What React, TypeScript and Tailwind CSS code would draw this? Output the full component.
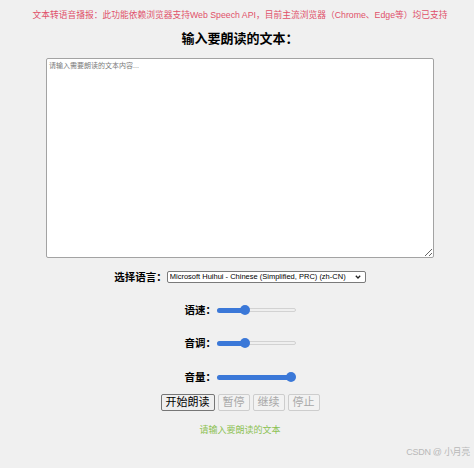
import React from "react";

const FONT = { fontFamily: '"Liberation Sans", "Noto Sans CJK SC", sans-serif' } as const;

function Slider({ label, pct }: { label: string; pct: number }) {
  return (
    <div className="flex items-center h-[12px]">
      <span className="text-[10.5px] leading-[12px] font-bold text-black w-[32px]">{label}</span>
      <div className="relative w-[79px] h-[12px] flex items-center">
        <div className="w-full h-[4px] rounded-full bg-[#efefef] border border-[#d2d2d2]" />
        <div
          className="absolute left-0 top-[3.5px] h-[5px] rounded-full bg-[#3b78d8]"
          style={{ width: `${5 + pct * 69}px` }}
        />
        <div
          className="absolute top-[1px] w-[10px] h-[10px] rounded-full bg-[#3b78d8]"
          style={{ left: `${pct * 69}px` }}
        />
      </div>
    </div>
  );
}

export default function App() {
  return (
    <div className="relative min-h-[468px] bg-[#f0f0f0] overflow-hidden" style={FONT}>
      <div className="flex flex-col items-center pl-[6px]">
        <p className="mt-[9px] text-[8.75px] leading-[12px] text-[#e0506a] whitespace-nowrap">
          文本转语音播报：此功能依赖浏览器支持Web Speech API，目前主流浏览器（Chrome、Edge等）均已支持
        </p>
        <h2 className="mt-[9px] text-[13px] leading-[18px] font-bold text-black">输入要朗读的文本：</h2>
        <textarea
          className="mt-[10px] w-[388px] h-[200px] bg-white border border-[#a3a3a3] rounded-[2px] p-[2px] text-[7px] leading-[9px] placeholder:text-[#7a7a7a] outline-none"
          placeholder="请输入需要朗读的文本内容..."
        />
        <div className="mt-[13px] flex items-center h-[12px]">
          <span className="text-[10.5px] leading-[12px] font-bold text-black">选择语言：</span>
          <div className="relative flex">
            <select className="appearance-none block w-[199px] h-[12px] min-h-0 py-0 bg-white border border-[#7a7a7a] rounded-[2px] pl-[2px] text-[7.5px] leading-[10px] text-black outline-none">
              <option>Microsoft Huihui - Chinese (Simplified, PRC) (zh-CN)</option>
            </select>
            <svg
              className="absolute right-[5px] top-[4px] w-[6px] h-[4px] pointer-events-none"
              viewBox="0 0 6 4"
              fill="none"
            >
              <path d="M0.8 0.8 L3 3 L5.2 0.8" stroke="#222" strokeWidth="1.3" />
            </svg>
          </div>
        </div>
        <div className="mt-[21px]">
          <Slider label="语速：" pct={0.34} />
        </div>
        <div className="mt-[21px]">
          <Slider label="音调：" pct={0.34} />
        </div>
        <div className="mt-[22px]">
          <Slider label="音量：" pct={1} />
        </div>
        <div className="mt-[11px] flex gap-[3px]">
          <button className="h-[17px] px-[4px] text-[11px] leading-[13px] text-black bg-[#efefef] border border-[#767676] rounded-[2px]">
            开始朗读
          </button>
          <button disabled className="h-[17px] px-[4px] text-[11px] leading-[13px] text-[#a8a8a8] bg-[#f2f2f2] border border-[#cdcdcd] rounded-[2px]">
            暂停
          </button>
          <button disabled className="h-[17px] px-[4px] text-[11px] leading-[13px] text-[#a8a8a8] bg-[#f2f2f2] border border-[#cdcdcd] rounded-[2px]">
            继续
          </button>
          <button disabled className="h-[17px] px-[4px] text-[11px] leading-[13px] text-[#a8a8a8] bg-[#f2f2f2] border border-[#cdcdcd] rounded-[2px]">
            停止
          </button>
        </div>
        <p className="mt-[13px] text-[9px] leading-[12px] text-[#8cc152]">请输入要朗读的文本</p>
      </div>
      <span className="absolute right-[4px] top-[446px] text-[9px] leading-[12px] tracking-[-0.3px] text-[#b8b8b8]">CSDN @ 小月亮</span>
    </div>
  );
}
